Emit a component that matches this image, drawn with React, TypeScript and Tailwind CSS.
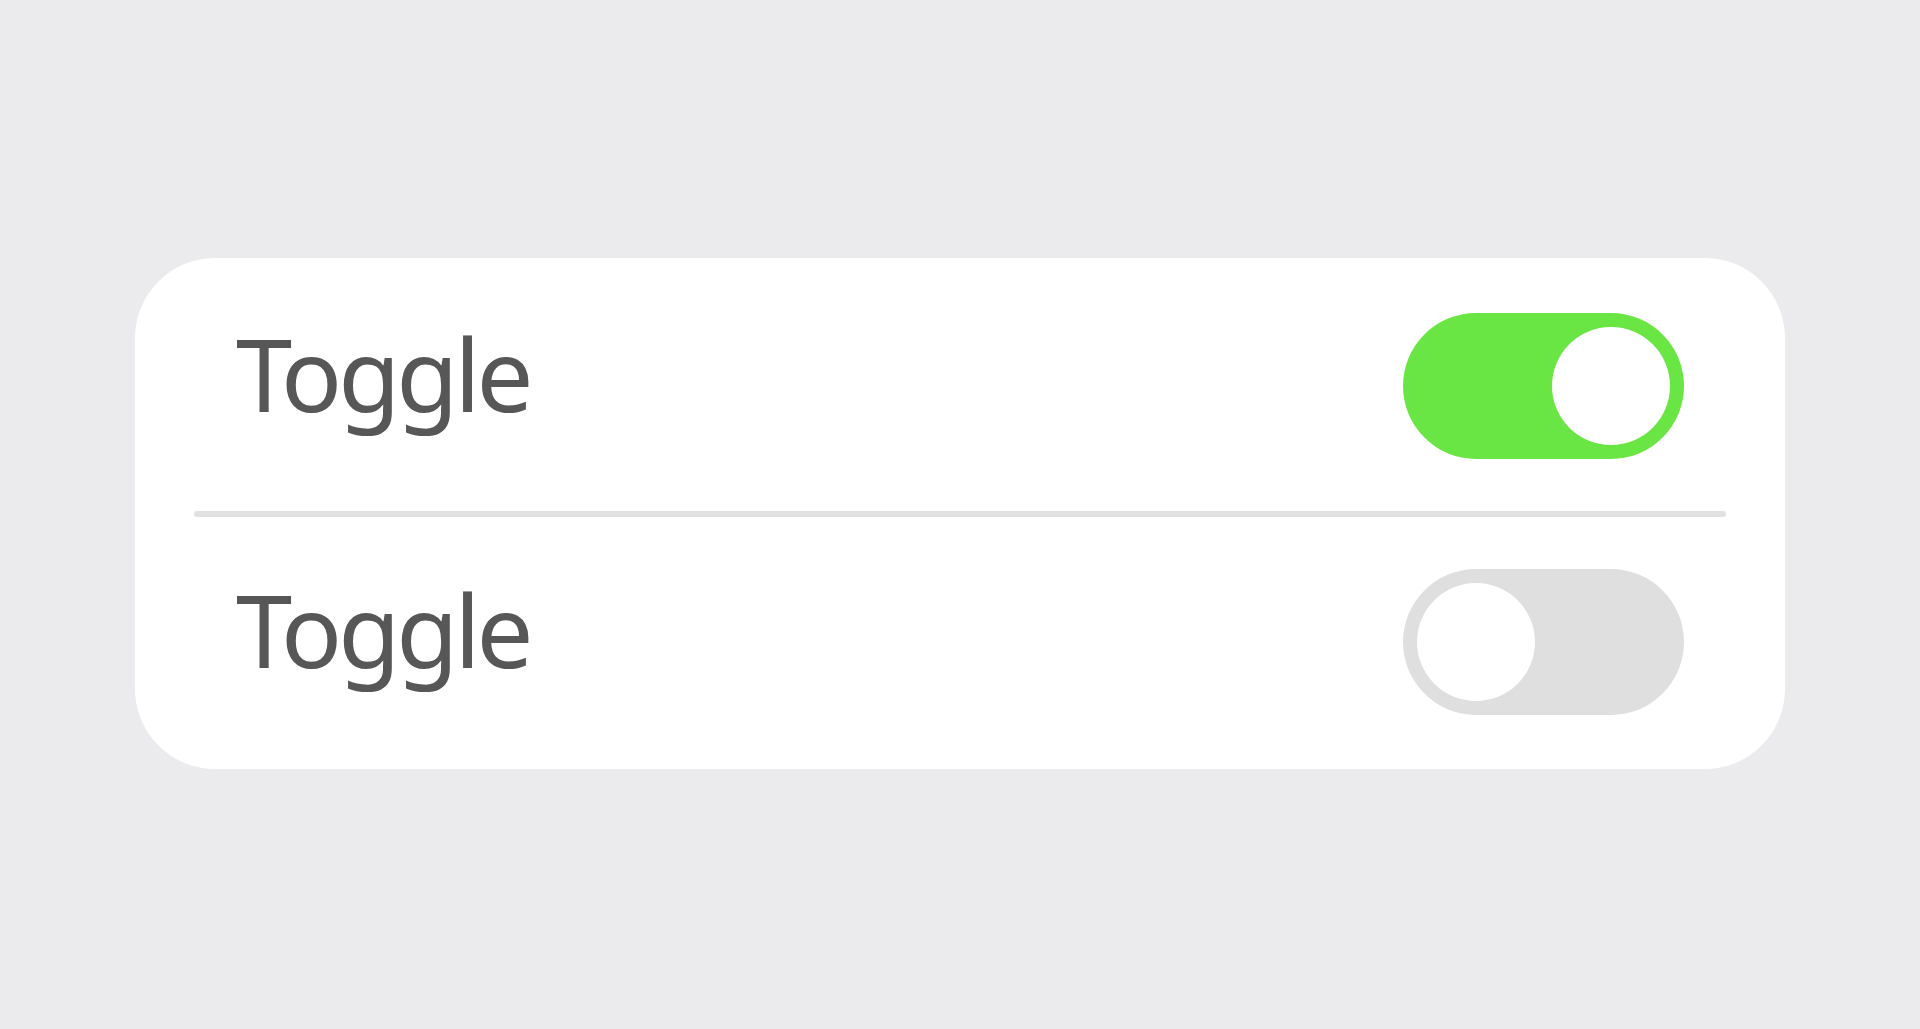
import { useState } from "react";

function Switch({ on, onChange }: { on: boolean; onChange: () => void }) {
    return (
        <button
            onClick={onChange}
            className={`w-[281px] h-[146px] p-[14px] rounded-full flex items-center shrink-0 ${on ? "bg-[#69e544] justify-end" : "bg-[#dfdfdf] justify-start"}`}
        >
            <span className="block w-[118px] h-[118px] rounded-full bg-white" />
        </button>
    );
}

export default function App() {
    const [first, setFirst] = useState(true);
    const [second, setSecond] = useState(false);

    const rows = [
        { label: "Toggle", on: first, toggle: () => setFirst(!first) },
        { label: "Toggle", on: second, toggle: () => setSecond(!second) },
    ];

    return (
        <div className="min-h-screen w-full bg-[#ebebed] pt-[258px] px-[135px]" style={{ fontFamily: "'Noto Sans', sans-serif" }}>
            <div className="bg-white rounded-[80px] px-[59px] pt-[55px] pb-[53px] h-[511px]">
                {rows.map((r, i) => (
                    <div key={i}>
                        {i > 0 && <div className="h-[6px] rounded-full bg-[#e1e1e1] my-[52px]" />}
                        <div className="flex items-center justify-between px-[42px]">
                            <span className="text-[101px] leading-none tracking-[-4px] text-[#575757] pb-[26px]">{r.label}</span>
                            <Switch on={r.on} onChange={r.toggle} />
                        </div>
                    </div>
                ))}
            </div>
        </div>
    );
}
